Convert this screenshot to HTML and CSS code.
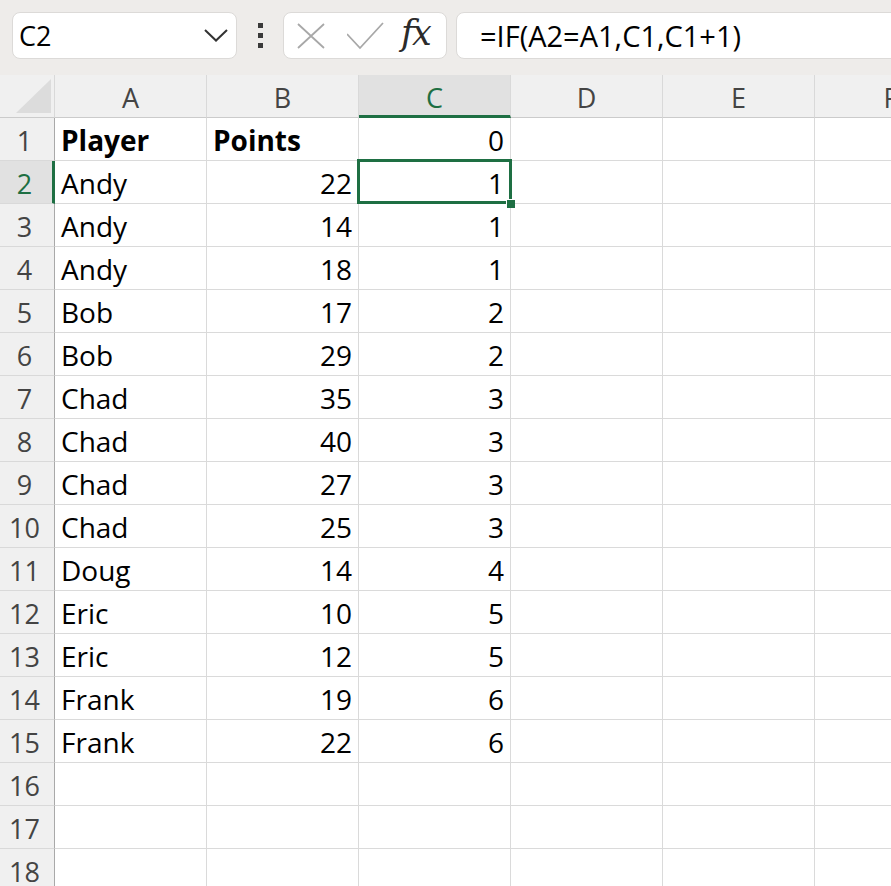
FILE: index.html
```html
<!DOCTYPE html>
<html lang="en">
<head>
    <meta charset="UTF-8">
    <meta name="viewport" content="width=device-width, initial-scale=1.0">
    <title>Hoja de cálculo</title>
    <link rel="stylesheet" href="styles.css">
</head>
<body>

    <div class="barra">
        <div class="caja nombre">
            <span>C2</span>
            <svg class="flecha" width="24" height="13" viewBox="0 0 24 13">
                <path d="M1 1 L12 11.5 L23 1" fill="none" stroke="#333" stroke-width="2"/>
            </svg>
        </div>
        <div class="puntos"><i></i><i></i><i></i></div>
        <div class="caja botones">
            <svg width="28" height="26" viewBox="0 0 28 26">
                <path d="M1 1 L27 25 M27 1 L1 25" fill="none" stroke="#a8a8a8" stroke-width="1.8"/>
            </svg>
            <svg class="ok" width="37" height="29" viewBox="0 0 37 29">
                <path d="M0 13 L13 27 L36 2" fill="none" stroke="#a8a8a8" stroke-width="1.8"/>
            </svg>
            <span class="fx">fx</span>
        </div>
        <div class="caja formula">=IF(A2=A1,C1,C1+1)</div>
    </div>

    <div class="hoja">
        <div class="esquina"></div>
        <div class="col">A</div>
        <div class="col">B</div>
        <div class="col activa">C</div>
        <div class="col">D</div>
        <div class="col">E</div>
        <div class="col">F</div>

        <div class="fila">1</div>
        <div class="celda negrita">Player</div>
        <div class="celda negrita">Points</div>
        <div class="celda num">0</div>
        <div class="celda"></div><div class="celda"></div><div class="celda"></div>

        <div class="fila activa">2</div>
        <div class="celda">Andy</div>
        <div class="celda num">22</div>
        <div class="celda num seleccion">1</div>
        <div class="celda"></div><div class="celda"></div><div class="celda"></div>

        <div class="fila">3</div>
        <div class="celda">Andy</div>
        <div class="celda num">14</div>
        <div class="celda num">1</div>
        <div class="celda"></div><div class="celda"></div><div class="celda"></div>

        <div class="fila">4</div>
        <div class="celda">Andy</div>
        <div class="celda num">18</div>
        <div class="celda num">1</div>
        <div class="celda"></div><div class="celda"></div><div class="celda"></div>

        <div class="fila">5</div>
        <div class="celda">Bob</div>
        <div class="celda num">17</div>
        <div class="celda num">2</div>
        <div class="celda"></div><div class="celda"></div><div class="celda"></div>

        <div class="fila">6</div>
        <div class="celda">Bob</div>
        <div class="celda num">29</div>
        <div class="celda num">2</div>
        <div class="celda"></div><div class="celda"></div><div class="celda"></div>

        <div class="fila">7</div>
        <div class="celda">Chad</div>
        <div class="celda num">35</div>
        <div class="celda num">3</div>
        <div class="celda"></div><div class="celda"></div><div class="celda"></div>

        <div class="fila">8</div>
        <div class="celda">Chad</div>
        <div class="celda num">40</div>
        <div class="celda num">3</div>
        <div class="celda"></div><div class="celda"></div><div class="celda"></div>

        <div class="fila">9</div>
        <div class="celda">Chad</div>
        <div class="celda num">27</div>
        <div class="celda num">3</div>
        <div class="celda"></div><div class="celda"></div><div class="celda"></div>

        <div class="fila">10</div>
        <div class="celda">Chad</div>
        <div class="celda num">25</div>
        <div class="celda num">3</div>
        <div class="celda"></div><div class="celda"></div><div class="celda"></div>

        <div class="fila">11</div>
        <div class="celda">Doug</div>
        <div class="celda num">14</div>
        <div class="celda num">4</div>
        <div class="celda"></div><div class="celda"></div><div class="celda"></div>

        <div class="fila">12</div>
        <div class="celda">Eric</div>
        <div class="celda num">10</div>
        <div class="celda num">5</div>
        <div class="celda"></div><div class="celda"></div><div class="celda"></div>

        <div class="fila">13</div>
        <div class="celda">Eric</div>
        <div class="celda num">12</div>
        <div class="celda num">5</div>
        <div class="celda"></div><div class="celda"></div><div class="celda"></div>

        <div class="fila">14</div>
        <div class="celda">Frank</div>
        <div class="celda num">19</div>
        <div class="celda num">6</div>
        <div class="celda"></div><div class="celda"></div><div class="celda"></div>

        <div class="fila">15</div>
        <div class="celda">Frank</div>
        <div class="celda num">22</div>
        <div class="celda num">6</div>
        <div class="celda"></div><div class="celda"></div><div class="celda"></div>

        <div class="fila">16</div>
        <div class="celda"></div><div class="celda"></div><div class="celda"></div>
        <div class="celda"></div><div class="celda"></div><div class="celda"></div>

        <div class="fila">17</div>
        <div class="celda"></div><div class="celda"></div><div class="celda"></div>
        <div class="celda"></div><div class="celda"></div><div class="celda"></div>

        <div class="fila">18</div>
        <div class="celda"></div><div class="celda"></div><div class="celda"></div>
        <div class="celda"></div><div class="celda"></div><div class="celda"></div>
    </div>

</body>
</html>
```

FILE: styles.css
```css
* {
    margin: 0;
    padding: 0;
    box-sizing: border-box;
}

body {
    background-color: #fff;
    font-family: "Open Sans", sans-serif;
    color: #000;
    overflow: hidden;
    width: 891px;
    height: 886px;
}

/* barra de formulas */
.barra {
    height: 75px;
    background-color: #eeecea;
    display: flex;
    align-items: flex-start;
    padding: 12px 0 0 12px;
    overflow: hidden;
}

.caja {
    background-color: #fff;
    border: 1px solid #dcdad8;
    border-radius: 8px;
    height: 47px;
    display: flex;
    align-items: center;
    flex-shrink: 0;
}

.nombre {
    width: 225px;
    padding: 0 8px 0 6px;
    justify-content: space-between;
    font-size: 27px;
}

.puntos {
    width: 46px;
    height: 47px;
    flex-shrink: 0;
    display: flex;
    flex-direction: column;
    align-items: center;
    justify-content: center;
    gap: 5px;
    padding-left: 1px;
}

.puntos i {
    width: 5px;
    height: 5px;
    background-color: #3a3a3a;
}

.botones {
    width: 164px;
    padding: 0 0 0 13px;
}

.botones .ok {
    margin-left: 22px;
}

.fx {
    font-family: "DejaVu Serif", serif;
    font-style: italic;
    font-size: 35px;
    color: #2b2b2b;
    margin-left: 17px;
    margin-top: -5px;
    letter-spacing: -2px;
}

.formula {
    margin-left: 9px;
    width: 460px;
    padding-left: 23px;
    font-size: 29px;
}

/* hoja */
.hoja {
    display: grid;
    grid-template-columns: 55px repeat(6, 152px);
    grid-template-rows: 43px;
    grid-auto-rows: 43px;
}

.esquina,
.col {
    background-color: #f0f0f0;
    border-bottom: 1px solid #cbcbcb;
    border-right: 1px solid #d9d9d9;
}

.esquina {
    position: relative;
}

.esquina::after {
    content: "";
    position: absolute;
    left: 16px;
    top: 4px;
    width: 35px;
    height: 34px;
    background-color: #dcdcdc;
    clip-path: polygon(100% 0, 100% 100%, 0 100%);
}

.col {
    display: flex;
    justify-content: center;
    align-items: center;
    font-size: 27px;
    color: #444;
    padding-top: 2px;
}

.col.activa {
    background-color: #e1e1e1;
    color: #1e6f43;
    border-bottom: 3px solid #1e6f43;
    padding-top: 4px;
}

.fila {
    background-color: #f0f0f0;
    border-right: 1px solid #a9a9a9;
    border-bottom: 1px solid #d9d9d9;
    display: flex;
    justify-content: center;
    align-items: center;
    font-size: 27px;
    color: #444;
    padding-right: 5px;
    padding-top: 2px;
}

.fila.activa {
    background-color: #e1e1e1;
    color: #1e6f43;
    border-right: 3px solid #1e6f43;
    padding-right: 3px;
}

.celda {
    border-right: 1px solid #dadada;
    border-bottom: 1px solid #dadada;
    font-size: 28px;
    line-height: 42px;
    padding: 1px 6px 0 6px;
    white-space: nowrap;
}

.negrita {
    font-weight: bold;
}

.num {
    text-align: right;
}

.seleccion {
    position: relative;
}

.seleccion::before {
    content: "";
    position: absolute;
    left: -2px;
    top: -2px;
    right: -2px;
    bottom: -1px;
    border: 3px solid #1e6f43;
}

.seleccion::after {
    content: "";
    position: absolute;
    right: -5px;
    bottom: -5px;
    width: 8px;
    height: 8px;
    background-color: #1e6f43;
    border-top: 1px solid #fff;
    border-left: 1px solid #fff;
}
```
